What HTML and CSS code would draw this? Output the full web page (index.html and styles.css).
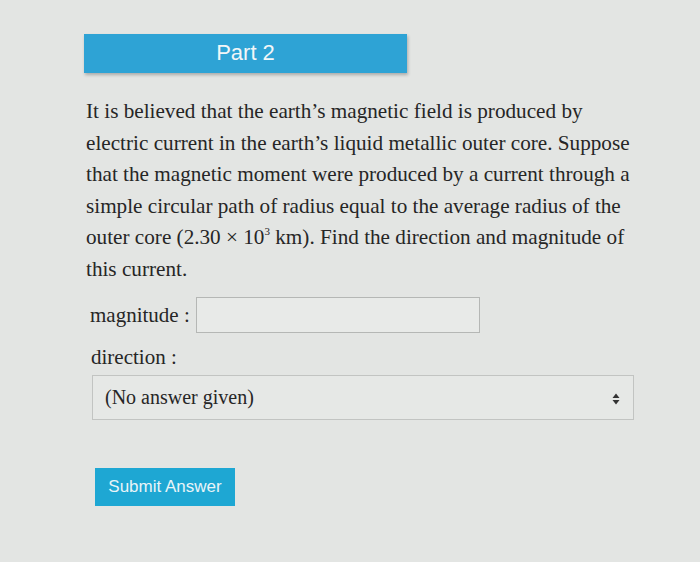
FILE: index.html
```html
<!DOCTYPE html>
<html>
<head>
<meta charset="utf-8">
<link rel="stylesheet" href="styles.css">
</head>
<body>
<div class="page">
  <div class="banner">Part 2</div>
  <p class="question">It is believed that the earth’s magnetic field is produced by<br>electric current in the earth’s liquid metallic outer core. Suppose<br>that the magnetic moment were produced by a current through a<br>simple circular path of radius equal to the average radius of the<br>outer core (2.30 × 10<sup>3</sup> km). Find the direction and magnitude of<br>this current.</p>
  <div class="row">
    <span class="label">magnitude :</span>
    <span class="input"></span>
  </div>
  <div class="label dir">direction :</div>
  <div class="select">
    <span>(No answer given)</span>
    <svg class="arrows" width="8" height="12" viewBox="0 0 8 12"><path d="M4 0.5 L7.5 5 L0.5 5 Z M4 11.5 L7.5 7 L0.5 7 Z" fill="#333"/></svg>
  </div>
  <div class="submit">Submit Answer</div>
</div>
</body>
</html>
```
FILE: styles.css
```css
html, body {
  margin: 0;
  padding: 0;
  background: #e3e5e3;
}
.page {
  width: 700px;
  height: 562px;
  box-sizing: border-box;
  padding: 34px 0 0 84px;
  font-family: "Liberation Serif", "Times New Roman", serif;
  color: #262626;
}
.banner {
  width: 323px;
  height: 39px;
  background: #2ea3d5;
  color: #f2f6f8;
  font-family: "Liberation Sans", Arial, sans-serif;
  font-size: 22px;
  line-height: 37px;
  text-align: center;
  box-shadow: 1px 2px 3px rgba(0,0,0,0.25);
}
.question {
  margin: 23px 0 0 2px;
  width: 600px;
  white-space: nowrap;
  font-size: 21.2px;
  line-height: 31.5px;
}
.question sup {
  font-size: 11px;
  line-height: 0;
  vertical-align: 9px;
}
.row {
  display: flex;
  align-items: center;
  margin: 12px 0 0 6px;
  gap: 6px;
}
.label {
  font-size: 21px;
  line-height: 24px;
}
.input {
  width: 282px;
  height: 34px;
  border: 1px solid #b5b7b5;
  background: #e8eae8;
}
.dir {
  margin: 12px 0 0 7px;
}
.select {
  margin: 6px 0 0 8px;
  width: 542px;
  height: 45px;
  box-sizing: border-box;
  border: 1px solid #c2c4c2;
  background: #e6e8e6;
  display: flex;
  align-items: center;
  justify-content: space-between;
  padding: 0 13px 0 12px;
  font-size: 20px;
}
.arrows {
  margin-top: 2px;
}
.submit {
  margin: 48px 0 0 11px;
  width: 140px;
  height: 38px;
  background: #1ea7d3;
  color: #e9f4f8;
  font-family: "Liberation Sans", Arial, sans-serif;
  font-size: 17px;
  line-height: 38px;
  text-align: center;
}
```
